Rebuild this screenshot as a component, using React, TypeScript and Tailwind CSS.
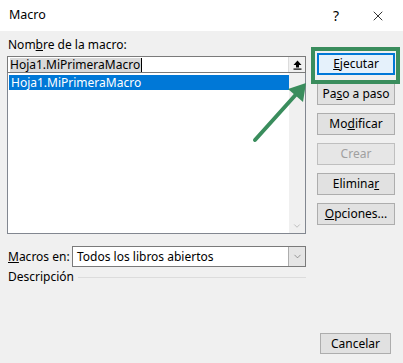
import { ChevronDown, X } from 'lucide-react';

const Btn = ({ children, disabled = false, primary = false }: { children: React.ReactNode; disabled?: boolean; primary?: boolean }) => {
  return (
    <div
      className={
        'h-[22px] w-[78px] flex items-center justify-center text-[12px] ' +
        (primary
          ? 'border-2 border-[#0078d7] bg-[#e5f1fb] text-black'
          : disabled
          ? 'border border-[#bfbfbf] bg-[#e6e6e6] text-[#a0a0a0]'
          : 'border border-[#adadad] bg-[#e1e1e1] text-black')
      }
    >
      {children}
    </div>
  );
};

const App = () => {
  return (
    <div className="w-[403px] h-[363px] bg-[#f0f0f0] flex flex-col font-['Noto_Sans',sans-serif] text-black relative overflow-hidden select-none">
      {/* title bar */}
      <div className="h-[31px] bg-white flex items-center pl-[9px] pr-[17px] text-[12.5px]">
        <span>Macro</span>
        <div className="flex-grow"></div>
        <span className="text-[14px] mr-[31px]">?</span>
        <X size={16} strokeWidth={1.2} />
      </div>

      <div className="flex flex-1 pl-[7px] pt-[6px]">
        {/* left column */}
        <div className="w-[299px] flex flex-col">
          <div className="text-[12px] leading-[16px] pl-[1px]">
            Nom<span className="underline">b</span>re de la macro:
          </div>
          <div className="mt-[3px] h-[17px] bg-white border border-[#7a7a7a] flex items-center">
            <span className="text-[12px] leading-[14px] ml-[2px] bg-[#d9d9d9] pr-[1px] border-r border-black">Hoja1.MiPrimeraMacro</span>
            <div className="flex-grow"></div>
            <div className="w-[17px] h-[15px] flex items-center justify-center bg-[#f0f0f0] border-l border-[#dcdcdc]">
              <svg width="9" height="10" viewBox="0 0 9 10">
                <path d="M4.5 0.5 L8.5 5 L6 5 L6 7.5 L3 7.5 L3 5 L0.5 5 Z" fill="#000" />
                <rect x="0.5" y="8.5" width="8" height="1.2" fill="#000" />
              </svg>
            </div>
          </div>
          <div className="h-[161px] bg-white border border-[#828790] border-t-0 flex">
            <div className="flex-1 pt-[2px] pl-[1px]">
              <div className="h-[15px] bg-[#0078d7] text-white text-[12px] leading-[15px] pl-[2px]">Hoja1.MiPrimeraMacro</div>
            </div>
            <div className="w-[16px] bg-[#f0f0f0] flex flex-col justify-end items-center pb-[2px]">
              <ChevronDown size={10} color="#a0a0a0" strokeWidth={1.5} />
            </div>
          </div>

          <div className="mt-[12px] flex items-center">
            <span className="text-[12px] w-[65px] pl-[1px]">
              <span className="underline">M</span>acros en:
            </span>
            <div className="flex-1 h-[21px] bg-white border border-[#7a7a7a] flex items-center">
              <span className="text-[12px] pl-[4px]">Todos los libros abiertos</span>
              <div className="flex-grow"></div>
              <div className="w-[17px] h-full bg-[#e5e5e5] border-l border-[#adadad] flex items-center justify-center">
                <ChevronDown size={11} color="#606060" strokeWidth={1.3} />
              </div>
            </div>
          </div>

          <div className="mt-[1px] flex items-center">
            <span className="text-[12px] pl-[1px]">Descripción</span>
            <div className="flex-1 h-px bg-[#dcdcdc] ml-[4px]"></div>
          </div>
        </div>

        {/* right column */}
        <div className="flex flex-col items-start pl-[11px] pt-[16px] gap-[8px]">
          <Btn primary><span><span className="underline">E</span>jecutar</span></Btn>
          <Btn><span>Pa<span className="underline">s</span>o a paso</span></Btn>
          <Btn><span>Mo<span className="underline">d</span>ificar</span></Btn>
          <Btn disabled>Crear</Btn>
          <Btn><span>Elimina<span className="underline">r</span></span></Btn>
          <Btn><span><span className="underline">O</span>pciones...</span></Btn>
        </div>
      </div>

      <div className="flex justify-end pr-[12px] pb-[9px]">
        <div className="h-[21px] w-[71px] border border-[#adadad] bg-[#e1e1e1] flex items-center justify-center text-[12px]">Cancelar</div>
      </div>

      {/* annotation: green box and arrow */}
      <div className="absolute left-[311px] top-[47px] w-[89px] h-[37px] border-[4px] border-[#3a8d5d]"></div>
      <svg className="absolute left-0 top-0" width="403" height="363" viewBox="0 0 403 363">
        <line x1="255" y1="140" x2="300" y2="90" stroke="#3a8d5d" strokeWidth="4" strokeLinecap="round" />
        <path d="M306 83 L303 102 L288 89 Z" fill="#3a8d5d" />
      </svg>
    </div>
  );
};

export default App;
